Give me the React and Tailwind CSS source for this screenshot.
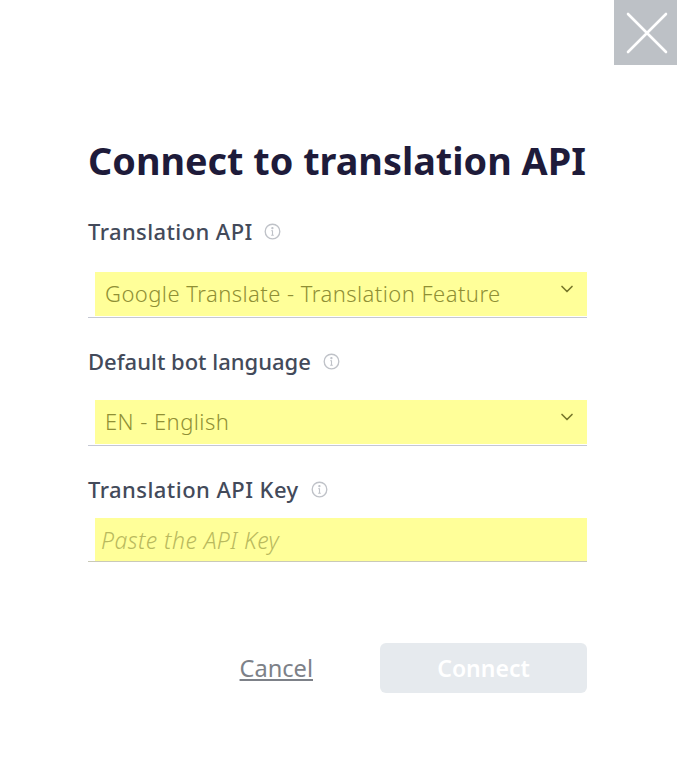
import { ChevronDown } from "lucide-react";

function InfoIcon() {
  return (
    <svg width="17" height="17" viewBox="0 0 17 17" fill="none" stroke="#bfc2c8" strokeWidth="1.35">
      <circle cx="8.5" cy="8.5" r="7.3" />
      <path d="M8.5 7.6v4.6M7.2 12.2h2.6M7.4 7.6h1.1" strokeWidth="1.1" />
      <circle cx="8.4" cy="5.1" r="0.5" fill="#bfc2c8" />
    </svg>
  );
}

function Label({ text, className }) {
  return (
    <div className="flex items-center h-[28px]">
      <span className={`text-[22px] font-medium text-[#434a5a] ${className}`}>{text}</span>
      <InfoIcon />
    </div>
  );
}

function SelectField({ value }) {
  return (
    <div className="border-b border-[#c5c8d4] pl-[7px] h-[46px]">
      <div className="flex justify-between h-[44px] bg-[#ffff99] px-[10px]">
        <span className="text-[22px] leading-[42px] tracking-[0.45px] font-light text-[#8f8f35]">{value}</span>
        <ChevronDown size={20} strokeWidth={2} className="mt-[7px] text-[#77772c]" />
      </div>
    </div>
  );
}

export default function App() {
  return (
    <div className="w-[677px] h-[767px] bg-white font-['Noto_Sans',sans-serif]">
      <div className="flex justify-end">
        <button className="flex items-center justify-center w-[63px] h-[65px] pl-[3px] bg-[#bdc1c6]">
          <svg width="42" height="42" viewBox="0 0 42 42" fill="none" stroke="#fff" strokeWidth="2.6" strokeLinecap="round">
            <path d="M2 2l38 38M40 2L2 40" />
          </svg>
        </button>
      </div>
      <div className="w-[587px] pl-[88px]">
        <h1 className="mt-[69px] text-[37.8px] leading-[54px] font-bold text-[#1e1b3a] whitespace-nowrap">
          Connect to translation API
        </h1>
        <div className="mt-[29px]">
          <Label text="Translation API" className="tracking-[0.4px] mr-[11px]" />
        </div>
        <div className="mt-[27px]">
          <SelectField value="Google Translate - Translation Feature" />
        </div>
        <div className="mt-[29px]">
          <Label text="Default bot language" className="mr-[12px]" />
        </div>
        <div className="mt-[25px]">
          <SelectField value="EN - English" />
        </div>
        <div className="mt-[29px]">
          <Label text="Translation API Key" className="tracking-[0.45px] mr-[12px]" />
        </div>
        <div className="mt-[15px] border-b border-[#c9c9b8] pl-[7px] h-[44px]">
          <div className="h-[43px] bg-[#ffff99] pl-[6px] text-[23px] leading-[45px] tracking-[0.45px] italic font-light text-[#b9b95e]">
            Paste the API Key
          </div>
        </div>
        <div className="flex items-center justify-end mt-[81px]">
          <a className="mt-[2px] text-[23.6px] text-[#7d8188] underline">Cancel</a>
          <button className="ml-[67px] w-[207px] h-[50px] rounded-[6px] bg-[#e6eaee] text-[23px] font-semibold text-white">
            Connect
          </button>
        </div>
      </div>
    </div>
  );
}
